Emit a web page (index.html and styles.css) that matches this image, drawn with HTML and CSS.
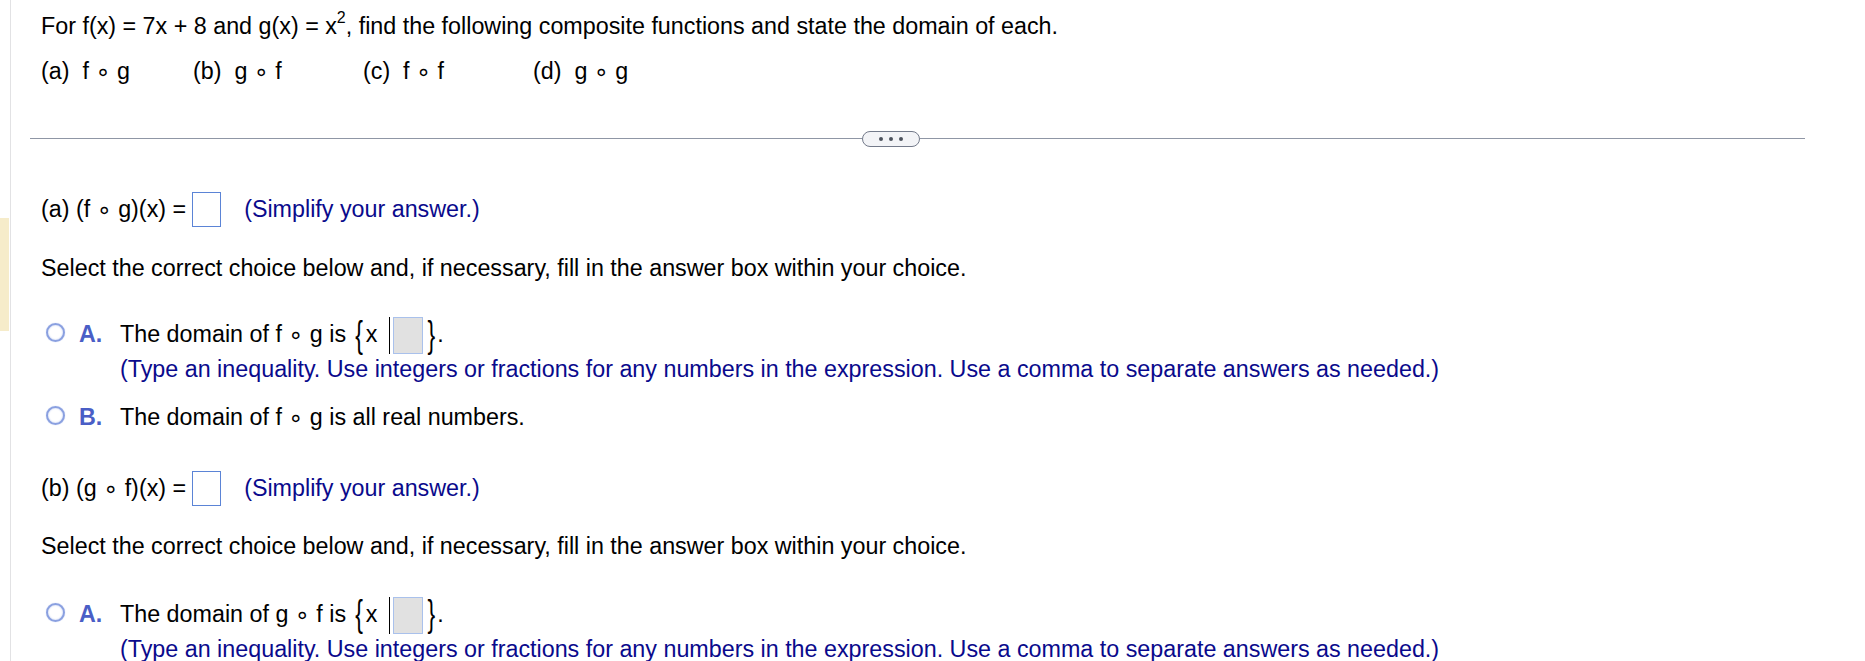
FILE: index.html
```html
<!DOCTYPE html>
<html>
<head>
<meta charset="utf-8">
<link rel="stylesheet" href="styles.css">
</head>
<body>
<div class="page">
  <div class="gutter"><div class="marker"></div></div>
  <div class="content">
    <div class="block">
      <div class="line l1">For f(x) = 7x + 8 and g(x) = x<sup>2</sup>, find the following composite functions and state the domain of each.</div>
      <div class="parts">
        <span>(a)&nbsp; f <span class="o">∘</span> g</span>
        <span>(b)&nbsp; g <span class="o">∘</span> f</span>
        <span>(c)&nbsp; f <span class="o">∘</span> f</span>
        <span>(d)&nbsp; g <span class="o">∘</span> g</span>
      </div>
    </div>

    <div class="rule">
      <div class="seg first"></div>
      <div class="pill"><i></i><i></i><i></i></div>
      <div class="seg"></div>
    </div>

    <div class="block">
      <div class="ansrow ra"><span class="alabel">(a) (f <span class="o">∘</span> g)(x) =</span><span class="abox"></span><span class="hint simp">(Simplify your answer.)</span></div>
      <div class="line sel">Select the correct choice below and, if necessary, fill in the answer box within your choice.</div>
      <div class="choice ca">
        <span class="radio"></span><span class="lbl">A.</span><span class="ctext">The domain of f <span class="o">∘</span> g is<span class="brace">{</span>x<span class="bar"></span><span class="gbox"></span><span class="brace cl">}</span>.</span>
      </div>
      <div class="line hint ind">(Type an inequality. Use integers or fractions for any numbers in the expression. Use a comma to separate answers as needed.)</div>
      <div class="choice cb">
        <span class="radio"></span><span class="lbl">B.</span><span class="ctext">The domain of f <span class="o">∘</span> g is all real numbers.</span>
      </div>

      <div class="ansrow rb"><span class="alabel">(b) (g <span class="o">∘</span> f)(x) =</span><span class="abox"></span><span class="hint simp">(Simplify your answer.)</span></div>
      <div class="line sel sel2">Select the correct choice below and, if necessary, fill in the answer box within your choice.</div>
      <div class="choice ca2">
        <span class="radio"></span><span class="lbl">A.</span><span class="ctext">The domain of g <span class="o">∘</span> f is<span class="brace">{</span>x<span class="bar"></span><span class="gbox"></span><span class="brace cl">}</span>.</span>
      </div>
      <div class="line hint ind">(Type an inequality. Use integers or fractions for any numbers in the expression. Use a comma to separate answers as needed.)</div>
    </div>
  </div>
</div>
</body>
</html>
```

FILE: styles.css
```css
html, body {
  margin: 0;
  padding: 0;
  background: #fff;
  overflow: hidden;
}
body {
  font-family: "Liberation Sans", Arial, sans-serif;
  font-size: 23.3px;
  color: #000;
}
.page {
  display: flex;
  height: 661px;
}
.gutter {
  width: 10px;
  flex: none;
}
.marker {
  margin-top: 218px;
  height: 113px;
  width: 9px;
  background: #f6ecca;
}
.content {
  flex: 1;
  border-left: 1px solid #e2e2e4;
  padding: 12px 60px 0 19px;
}
.block {
  padding-left: 11px;
}
.line {
  height: 28px;
  line-height: 28px;
  white-space: nowrap;
}
sup {
  font-size: 16px;
  vertical-align: 11px;
  line-height: 0;
}
.o {
  font-family: "DejaVu Sans", sans-serif;
  font-size: 24px;
  line-height: 0;
  vertical-align: -1px;
}
.parts {
  display: grid;
  grid-template-columns: 152px 170px 170px auto;
  height: 28px;
  line-height: 28px;
  margin-top: 17px;
  white-space: nowrap;
}
.rule {
  display: flex;
  align-items: center;
  margin-top: 46px;
  height: 15px;
}
.seg {
  flex: 1;
  height: 1px;
  background: #8f96a5;
}
.seg.first {
  flex: none;
  width: 832px;
}
.pill {
  width: 56px;
  height: 14px;
  border: 1px solid #737a8a;
  border-radius: 8px;
  background: #f3f4f7;
  display: flex;
  align-items: center;
  justify-content: center;
  gap: 6px;
}
.pill i {
  width: 4px;
  height: 4px;
  border-radius: 50%;
  background: #4e535e;
}
.ansrow {
  display: flex;
  align-items: center;
  height: 36px;
  white-space: nowrap;
}
.ra { margin-top: 45px; }
.rb { margin-top: 39px; }
.abox {
  width: 27px;
  height: 33px;
  border: 1px solid #5b84d6;
  margin-left: 6px;
  background: #fff;
  flex: none;
}
.hint {
  color: #0a0a8c;
}
.simp {
  margin-left: 23px;
}
.sel { margin-top: 27px; }
.sel2 { margin-top: 26px; }
.choice {
  display: flex;
  align-items: center;
  height: 38px;
  white-space: nowrap;
}
.ca { margin-top: 33px; }
.ca2 { margin-top: 35px; }
.cb { margin-top: 20px; height: 28px; }
.radio {
  width: 15px;
  height: 15px;
  border-radius: 50%;
  border: 2px solid #8aa0e0;
  box-shadow: inset 0 0 2px #b9c7ef, 0 0 1px #a9b9ea;
  margin-left: 5px;
  margin-right: 14px;
  margin-top: -3px;
  flex: none;
}
.lbl {
  width: 41px;
  font-weight: bold;
  color: #4a5ec6;
  flex: none;
}
.ctext {
  display: inline-block;
  height: 38px;
  line-height: 38px;
}
.brace {
  display: inline-block;
  font-size: 23px;
  transform: scaleY(1.6);
  margin: 0 3px 0 9px;
  line-height: 23px;
  vertical-align: 0;
}
.brace.cl {
  margin: 0 2px 0 0;
}
.bar {
  display: inline-block;
  width: 1px;
  height: 37px;
  background: #000;
  margin-left: 12px;
  vertical-align: middle;
}
.gbox {
  display: inline-block;
  width: 28px;
  height: 35px;
  margin-left: 3px;
  margin-right: 4px;
  border: 1px solid #a9c1ec;
  background: #e1e1e1;
  vertical-align: middle;
}
.ind {
  padding-left: 79px;
  margin-top: 2px;
}
```
